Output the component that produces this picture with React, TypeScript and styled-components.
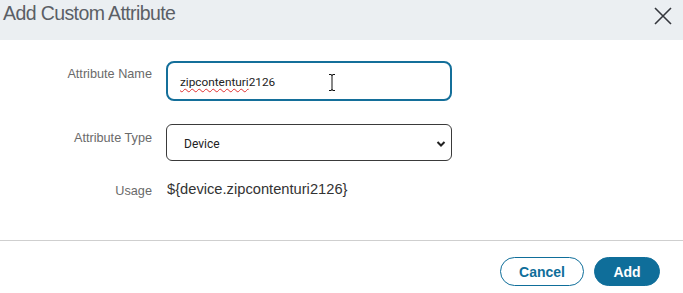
import React from "react";
import styled, { createGlobalStyle } from "styled-components";

const Global = createGlobalStyle`
  html, body { margin: 0; padding: 0; background: #fff; }
  body { font-family: "Liberation Sans", Arial, sans-serif; }
  * { box-sizing: border-box; }
`;

const Dialog = styled.div`
  width: 683px;
  height: 293px;
  display: flex;
  flex-direction: column;
  background: #fff;
  overflow: hidden;
`;

const Header = styled.div`
  height: 40px;
  background: #ebeff2;
  display: flex;
  align-items: flex-start;
  justify-content: space-between;
  padding: 2px 9px 0 3px;
`;

const Title = styled.h1`
  margin: 0;
  font-family: "Liberation Sans", Arial, sans-serif;
  font-weight: 400;
  font-size: 19.5px;
  letter-spacing: -0.6px;
  line-height: 22px;
  color: #5b5f66;
`;

const CloseButton = styled.button`
  border: 0;
  background: transparent;
  padding: 0;
  margin-top: 3px;
  width: 22px;
  height: 22px;
  display: flex;
  align-items: center;
  justify-content: center;
  cursor: pointer;
`;

const Body = styled.div`
  flex: 1;
  display: grid;
  grid-template-columns: 152px 286px;
  column-gap: 14px;
  row-gap: 23px;
  align-content: start;
  padding-top: 21px;
  border-bottom: 1px solid #cfcfcf;
`;

const Label = styled.label<{ $pad: number }>`
  justify-self: end;
  padding-top: ${(p) => p.$pad}px;
  font-family: "Liberation Sans", Arial, sans-serif;
  font-size: 12.7px;
  line-height: 14px;
  color: #6a6a6a;
`;

const FieldWrap = styled.div`
  position: relative;
`;

const TextField = styled.div`
  height: 40px;
  border: 2px solid #146f9a;
  border-radius: 8px;
  padding: 2px 12px 0;
  display: flex;
  align-items: center;
  font-family: Roboto, "Liberation Sans", sans-serif;
  font-size: 11.8px;
  color: #222;
`;

const Misspelled = styled.span`
  text-decoration: underline wavy #e03030;
  text-decoration-thickness: 1px;
  text-underline-offset: 2px;
`;

const Cursor = styled.svg`
  position: absolute;
  left: 162px;
  top: 13px;
`;

const Select = styled.div`
  height: 37px;
  border: 1px solid #3a3a3a;
  border-radius: 6px;
  padding: 2px 5px 0 17px;
  display: flex;
  align-items: center;
  justify-content: space-between;
  font-family: Roboto, "Liberation Sans", sans-serif;
  font-size: 12px;
  color: #222;
`;

const UsageValue = styled.div`
  margin-top: -4px;
  margin-left: 1px;
  font-family: "Liberation Sans", Arial, sans-serif;
  font-size: 14.7px;
  line-height: 18px;
  color: #333;
`;

const Footer = styled.div`
  height: 52px;
  display: flex;
  justify-content: flex-end;
  align-items: flex-start;
  gap: 10px;
  padding: 16px 23px 0 0;
`;

const Button = styled.button<{ $primary?: boolean }>`
  height: 29px;
  border-radius: 15px;
  border: 1px solid #0f6e9a;
  background: ${(p) => (p.$primary ? "#0f6e9a" : "#fff")};
  color: ${(p) => (p.$primary ? "#fff" : "#0f6e9a")};
  font-family: "Liberation Sans", Arial, sans-serif;
  font-weight: 700;
  font-size: 14px;
  padding: 0;
  width: ${(p) => (p.$primary ? 66 : 84)}px;
  cursor: pointer;
`;

export default function App() {
  return (
    <Dialog>
      <Global />
      <Header>
        <Title>Add Custom Attribute</Title>
        <CloseButton aria-label="Close">
          <svg width="20" height="20" viewBox="0 0 20 20">
            <path d="M2 2 L18 18 M18 2 L2 18" stroke="#34373d" strokeWidth="1.6" fill="none" />
          </svg>
        </CloseButton>
      </Header>
      <Body>
        <Label $pad={6}>Attribute Name</Label>
        <FieldWrap>
          <TextField>
            <Misspelled>zipcontenturi</Misspelled>2126
          </TextField>
          <Cursor width="8" height="17" viewBox="0 0 8 17">
            <path d="M1 0.5 H3 Q4 0.5 4 2 V15 Q4 16.5 3 16.5 H1 M7 0.5 H5 Q4 0.5 4 2 M4 15 Q4 16.5 5 16.5 H7" stroke="#111" strokeWidth="1" fill="none" />
          </Cursor>
        </FieldWrap>
        <Label $pad={7}>Attribute Type</Label>
        <Select>
          <span>Device</span>
          <svg width="10" height="8" viewBox="0 0 10 8">
            <path d="M1.5 2 L5 5.5 L8.5 2" stroke="#222" strokeWidth="2" fill="none" />
          </svg>
        </Select>
        <Label $pad={0}>Usage</Label>
        <UsageValue>{"${device.zipcontenturi2126}"}</UsageValue>
      </Body>
      <Footer>
        <Button>Cancel</Button>
        <Button $primary>Add</Button>
      </Footer>
    </Dialog>
  );
}
